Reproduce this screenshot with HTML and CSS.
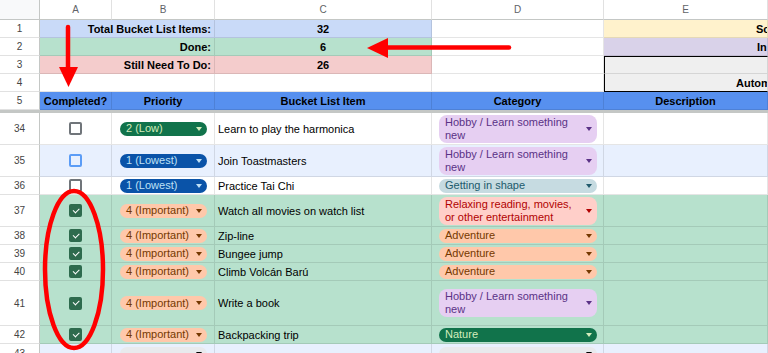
FILE: index.html
```html
<!DOCTYPE html>
<html>

<head>
    <link rel="stylesheet" href="styles.css">
</head>

<body>
    <div class="page">
        <div class="sheet">
            <div class="corner"></div>
            <div class="colhead">A</div>
            <div class="colhead">B</div>
            <div class="colhead">C</div>
            <div class="colhead">D</div>
            <div class="colhead">E</div>

            <div class="rownum">1</div>
            <div class="cell label span2 total">Total Bucket List Items:</div>
            <div class="cell value total">32</div>
            <div class="cell"></div>
            <div class="cell note yellow note-sc">Sc</div>

            <div class="rownum">2</div>
            <div class="cell label span2 done">Done:</div>
            <div class="cell value done">6</div>
            <div class="cell"></div>
            <div class="cell note purple note-in">In</div>

            <div class="rownum">3</div>
            <div class="cell label span2 todo">Still Need To Do:</div>
            <div class="cell value todo">26</div>
            <div class="cell"></div>
            <div class="cell note boxed box-top"></div>

            <div class="rownum">4</div>
            <div class="cell span2"></div>
            <div class="cell"></div>
            <div class="cell"></div>
            <div class="cell note boxed box-bottom note-auto">Autom</div>

            <div class="rownum">5</div>
            <div class="cell head">Completed?</div>
            <div class="cell head">Priority</div>
            <div class="cell head">Bucket List Item</div>
            <div class="cell head">Category</div>
            <div class="cell head">Description</div>

            <div class="freeze"></div>

            <!-- row 34 -->
            <div class="rownum">34</div>
            <div class="cell check"><span class="box"></span></div>
            <div class="cell pick"><span class="chip low">2 (Low)<i></i></span></div>
            <div class="cell">Learn to play the harmonica</div>
            <div class="cell pick cat"><span class="chip tall hobby">Hobby / Learn something<br>new<i></i></span></div>
            <div class="cell"></div>

            <!-- row 35 -->
            <div class="rownum">35</div>
            <div class="cell band check"><span class="box focus"></span></div>
            <div class="cell band pick"><span class="chip lowest">1 (Lowest)<i></i></span></div>
            <div class="cell band">Join Toastmasters</div>
            <div class="cell band pick cat"><span class="chip tall hobby">Hobby / Learn something<br>new<i></i></span></div>
            <div class="cell band"></div>

            <!-- row 36 -->
            <div class="rownum">36</div>
            <div class="cell check"><span class="box"></span></div>
            <div class="cell pick"><span class="chip lowest">1 (Lowest)<i></i></span></div>
            <div class="cell">Practice Tai Chi</div>
            <div class="cell pick cat"><span class="chip shape">Getting in shape<i></i></span></div>
            <div class="cell"></div>

            <!-- row 37 -->
            <div class="rownum">37</div>
            <div class="cell done check"><span class="box on"></span></div>
            <div class="cell done pick"><span class="chip important">4 (Important)<i></i></span></div>
            <div class="cell done">Watch all movies on watch list</div>
            <div class="cell done pick cat"><span class="chip tall relax">Relaxing reading, movies,<br>or other entertainment<i></i></span></div>
            <div class="cell done"></div>

            <!-- row 38 -->
            <div class="rownum">38</div>
            <div class="cell done check"><span class="box on"></span></div>
            <div class="cell done pick"><span class="chip important">4 (Important)<i></i></span></div>
            <div class="cell done">Zip-line</div>
            <div class="cell done pick cat"><span class="chip adventure">Adventure<i></i></span></div>
            <div class="cell done"></div>

            <!-- row 39 -->
            <div class="rownum">39</div>
            <div class="cell done check"><span class="box on"></span></div>
            <div class="cell done pick"><span class="chip important">4 (Important)<i></i></span></div>
            <div class="cell done">Bungee jump</div>
            <div class="cell done pick cat"><span class="chip adventure">Adventure<i></i></span></div>
            <div class="cell done"></div>

            <!-- row 40 -->
            <div class="rownum">40</div>
            <div class="cell done check"><span class="box on"></span></div>
            <div class="cell done pick"><span class="chip important">4 (Important)<i></i></span></div>
            <div class="cell done">Climb Volcán Barú</div>
            <div class="cell done pick cat"><span class="chip adventure">Adventure<i></i></span></div>
            <div class="cell done"></div>

            <!-- row 41 -->
            <div class="rownum">41</div>
            <div class="cell done check"><span class="box on"></span></div>
            <div class="cell done pick"><span class="chip important">4 (Important)<i></i></span></div>
            <div class="cell done">Write a book</div>
            <div class="cell done pick cat"><span class="chip tall hobby">Hobby / Learn something<br>new<i></i></span></div>
            <div class="cell done"></div>

            <!-- row 42 -->
            <div class="rownum">42</div>
            <div class="cell done check"><span class="box on"></span></div>
            <div class="cell done pick"><span class="chip important">4 (Important)<i></i></span></div>
            <div class="cell done">Backpacking trip</div>
            <div class="cell done pick cat"><span class="chip nature">Nature<i></i></span></div>
            <div class="cell done"></div>

            <!-- row 43 -->
            <div class="rownum">43</div>
            <div class="cell band"></div>
            <div class="cell band pick"><span class="chip empty"><i></i></span></div>
            <div class="cell band"></div>
            <div class="cell band pick cat"><span class="chip empty"><i></i></span></div>
            <div class="cell band"></div>
        </div>

        <!-- red markup drawn over the screenshot -->
        <svg class="marks" width="768" height="353" viewBox="0 0 768 353">
            <line x1="68" y1="27" x2="68" y2="70" stroke="#f00" stroke-width="4.5" stroke-linecap="round" />
            <polygon points="59,67 78,67 68.5,87" fill="#f00" />
            <line x1="385" y1="47.5" x2="509" y2="47.5" stroke="#f00" stroke-width="4.5" stroke-linecap="round" />
            <polygon points="388,38 388,58 367,48" fill="#f00" />
            <ellipse cx="74" cy="269.5" rx="29" ry="78.5" fill="none" stroke="#f00" stroke-width="4.5" />
        </svg>
    </div>
</body>

</html>
```

FILE: styles.css
```css
body {
    margin: 0;
    font-family: "Liberation Sans", Arial, sans-serif;
    font-size: 11px;
    color: #000;
    background: #fff;
}

.page {
    position: relative;
    width: 768px;
    height: 353px;
    overflow: hidden;
}

.sheet {
    display: grid;
    grid-template-columns: 40px 72px 103px 217px 172px 1fr;
    grid-template-rows: 20px repeat(5, 18px) 3px 32px 32px 18px 32px 18px 18px 18px 45px 18px 20px;
    width: 768px;
}

.corner {
    background: #f8f9fa;
    border-right: 1px solid #c4c7c5;
    border-bottom: 1px solid #c4c7c5;
}

.colhead {
    display: flex;
    align-items: center;
    justify-content: center;
    font-size: 10px;
    color: #5f6368;
    border-right: 1px solid #e1e1e1;
    border-bottom: 1px solid #c4c7c5;
}

.rownum {
    display: flex;
    align-items: center;
    justify-content: center;
    font-size: 10px;
    color: #444;
    border-right: 1px solid #c4c7c5;
    border-bottom: 1px solid #e1e1e1;
}

.cell {
    display: flex;
    align-items: center;
    min-width: 0;
    padding: 0 3px;
    overflow: hidden;
    white-space: nowrap;
    border-right: 1px solid rgba(0, 0, 0, .1);
    border-bottom: 1px solid rgba(0, 0, 0, .1);
}

.span2 {
    grid-column: span 2;
}

.label {
    justify-content: flex-end;
    font-weight: bold;
}

.value {
    justify-content: center;
    font-weight: bold;
}

.total {
    background: #c9daf8;
}

.done {
    background: #b7e1cd;
}

.todo {
    background: #f4cccc;
}

.band {
    background: #e8f0fe;
}

.note {
    font-weight: bold;
    padding: 0;
}

.yellow {
    background: #fff2cc;
}

.purple {
    background: #d9d2e9;
}

.note-sc {
    padding-left: 152px;
}

.note-in {
    padding-left: 153px;
}

.note-auto {
    padding-left: 131px;
}

.boxed {
    background: #efefef;
    border-left: 1px solid #000;
}

.box-top {
    border-top: 1px solid #000;
}

.box-bottom {
    border-bottom: 1px solid #000;
}

.head {
    justify-content: center;
    font-weight: bold;
    background: #5790ef;
}

.freeze {
    grid-column: 1 / -1;
    background: #c4c7c5;
}

/* checkboxes */
.check {
    justify-content: center;
    padding: 0;
}

.box {
    position: relative;
    box-sizing: border-box;
    width: 13px;
    height: 13px;
    border: 2px solid #70757a;
    border-radius: 2px;
}

.box.focus {
    border-color: #5b9cf6;
}

.box.on {
    background: #2e6b4e;
    border-color: #2e6b4e;
}

.box.on::after {
    content: "";
    position: absolute;
    left: 1.5px;
    top: 1.5px;
    width: 5px;
    height: 2.5px;
    border-left: 1.5px solid #fff;
    border-bottom: 1.5px solid #fff;
    transform: rotate(-45deg);
}

/* dropdown chips */
.pick {
    padding: 0 7px 0 8px;
}

.pick.cat {
    padding: 0 6px 0 7px;
}

.chip {
    flex: 1;
    display: flex;
    align-items: center;
    justify-content: space-between;
    height: 14px;
    padding: 0 5px 0 6px;
    border-radius: 7px;
    line-height: 13px;
}

.chip i {
    width: 0;
    height: 0;
    border-left: 3.5px solid transparent;
    border-right: 3.5px solid transparent;
    border-top: 4px solid currentColor;
}

.chip.tall {
    display: block;
    position: relative;
    height: auto;
    padding: 1px 20px 1px 6px;
    border-radius: 8px;
    white-space: nowrap;
}

.chip.tall i {
    position: absolute;
    right: 5px;
    top: 50%;
    margin-top: -2px;
}

.low,
.nature {
    background: #11734b;
    color: #d4edbc;
}

.lowest {
    background: #0a53a8;
    color: #bfe1f6;
}

.important,
.adventure {
    background: #ffc8aa;
    color: #753800;
}

.hobby {
    background: #e6cff2;
    color: #5a3286;
}

.shape {
    background: #c6dbe1;
    color: #215a6c;
}

.relax {
    background: #ffcfc9;
    color: #b10202;
}

.empty {
    background: #e8eaed;
    color: #000;
    justify-content: flex-end;
}

.marks {
    position: absolute;
    top: 0;
    left: 0;
    pointer-events: none;
}
```
